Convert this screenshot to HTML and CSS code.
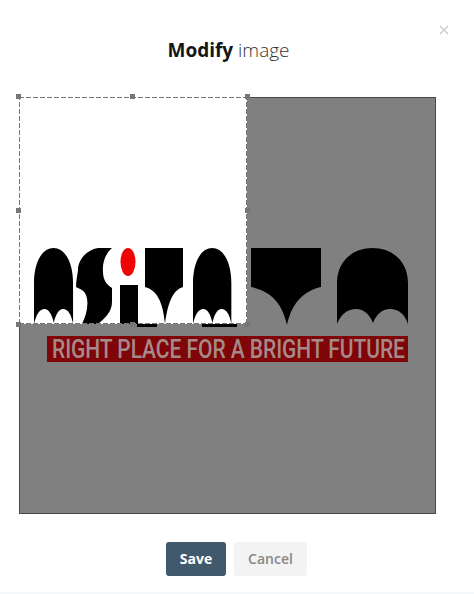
FILE: index.html
```html
<!DOCTYPE html>
<html lang="en">
<head>
<meta charset="utf-8">
<title>Modify image</title>
<link rel="stylesheet" href="styles.css">
</head>
<body>
<main class="modal">
  <button class="close" aria-label="Close">
    <svg viewBox="0 0 10 10" width="10" height="10"><path d="M1 1L9 9M9 1L1 9"/></svg>
  </button>
  <h1 class="title"><strong>Modify</strong> image</h1>
  <div class="canvas">
    <svg class="art" viewBox="19 97 417 417" width="417" height="417">
      <defs>
        <path id="dome" d="M337 324V283C337 262 352 248 372.500 248C393 248 408 262 408 283V324C405 314 398 309 390 309C382 309 376 315 373 323C370 315 364 309 356 309C348 309 341 314 337 324Z"/>
        <clipPath id="crop"><rect x="19" y="97" width="228" height="227"/></clipPath>
      </defs>
      <rect x="19.500" y="97.500" width="416" height="416" fill="#808080" stroke="#484848"/>
      <rect x="137" y="323" width="20" height="4"/>
      <rect x="202" y="324" width="35" height="3"/>
      <path d="M251 248H321V287C304 291 292 302 287 325C282 302 270 291 251 287Z"/>
      <use href="#dome"/>
      <rect x="47" y="336" width="361" height="26" fill="#7f0508"/>
      <text class="slogan" transform="translate(52 358) scale(1 1.220)" textLength="353">RIGHT PLACE FOR A BRIGHT FUTURE</text>
      <g clip-path="url(#crop)">
        <rect x="19" y="97" width="228" height="227" fill="#fff"/>
        <use href="#dome" transform="translate(34 0) scale(.55 1) translate(-337 0)"/>
        <use href="#dome" transform="translate(193 0) scale(.54 1) translate(-337 0)"/>
        <path d="M112 248H98C86 250 78 260 78 270C77 277 76 282 76 287C80 289 84 290 86 295C89 303 87 314 82 324H98C105 318 112 312 112 302V288C107 285 103 280 103 272C102 262 106 253 112 248Z"/>
        <rect x="120" y="285" width="18" height="39"/>
        <ellipse cx="128" cy="262" rx="7.500" ry="14" fill="#f00505"/>
        <path d="M145 248H183V287C173 290 168 302 165 324C163 302 157 290 145 287Z"/>
      </g>
    </svg>
    <div class="crop">
      <span class="handle h-tl"></span><span class="handle h-tc"></span><span class="handle h-tr"></span>
      <span class="handle h-ml"></span><span class="handle h-mr"></span>
      <span class="handle h-bl"></span><span class="handle h-bc"></span><span class="handle h-br"></span>
    </div>
  </div>
  <div class="actions">
    <button class="btn btn-save">Save</button>
    <button class="btn btn-cancel">Cancel</button>
  </div>
</main>
</body>
</html>
```
FILE: styles.css
```css
html, body {
  margin: 0;
  padding: 0;
  background: #fff;
}
.modal {
  position: relative;
  width: 474px;
  height: 594px;
  box-sizing: border-box;
  padding-top: 38px;
  border-bottom: 2px solid #f4f7f9;
  font-family: "Open Sans", "Liberation Sans", sans-serif;
  overflow: hidden;
}
.close {
  position: absolute;
  top: 25px;
  right: 25px;
  width: 10px;
  height: 10px;
  padding: 0;
  border: 0;
  background: none;
  line-height: 0;
}
.close path {
  fill: none;
  stroke: #c9c9c9;
  stroke-width: 1.300;
}
.title {
  width: 457px;
  margin: 0;
  height: 59px;
  line-height: 25px;
  text-align: center;
  font-size: 19px;
  font-weight: 300;
  color: #333;
}
.title strong {
  font-weight: 700;
  color: #151515;
}
.canvas {
  position: relative;
  width: 417px;
  height: 417px;
  margin-left: 19px;
}
.art {
  display: block;
  fill: #000;
}
.slogan {
  font-family: Roboto, "Open Sans", sans-serif;
  font-size: 21px;
  font-weight: 500;
  fill: #a68a8a;
}
.crop {
  position: absolute;
  left: 0;
  top: 0;
  width: 228px;
  height: 227px;
  background:
    repeating-linear-gradient(90deg, #777 0 5px, transparent 5px 7px) top / 100% 1px no-repeat,
    repeating-linear-gradient(90deg, #777 0 5px, transparent 5px 7px) bottom / 100% 1px no-repeat,
    repeating-linear-gradient(0deg, #777 0 5px, transparent 5px 7px) left / 1px 100% no-repeat,
    repeating-linear-gradient(0deg, #777 0 5px, transparent 5px 7px) right / 1px 100% no-repeat;
}
.handle {
  position: absolute;
  width: 5px;
  height: 5px;
  background: #777;
}
.h-tl, .h-tc, .h-tr { top: -3px; }
.h-ml, .h-mr { top: 111px; }
.h-bl, .h-bc, .h-br { bottom: -3px; }
.h-tl, .h-ml, .h-bl { left: -3px; }
.h-tc, .h-bc { left: 111px; }
.h-tr, .h-mr, .h-br { right: -3px; }
.actions {
  display: flex;
  justify-content: center;
  gap: 8px;
  margin-top: 28px;
  padding-right: 1px;
}
.btn {
  height: 34px;
  border: 0;
  border-radius: 3px;
  font-family: inherit;
  font-size: 14px;
  line-height: 34px;
  padding: 0;
}
.btn-save {
  width: 60px;
  background: #41596d;
  color: #fff;
  font-weight: 700;
}
.btn-cancel {
  width: 73px;
  background: #f3f3f3;
  color: #888;
  font-weight: 600;
}
```
